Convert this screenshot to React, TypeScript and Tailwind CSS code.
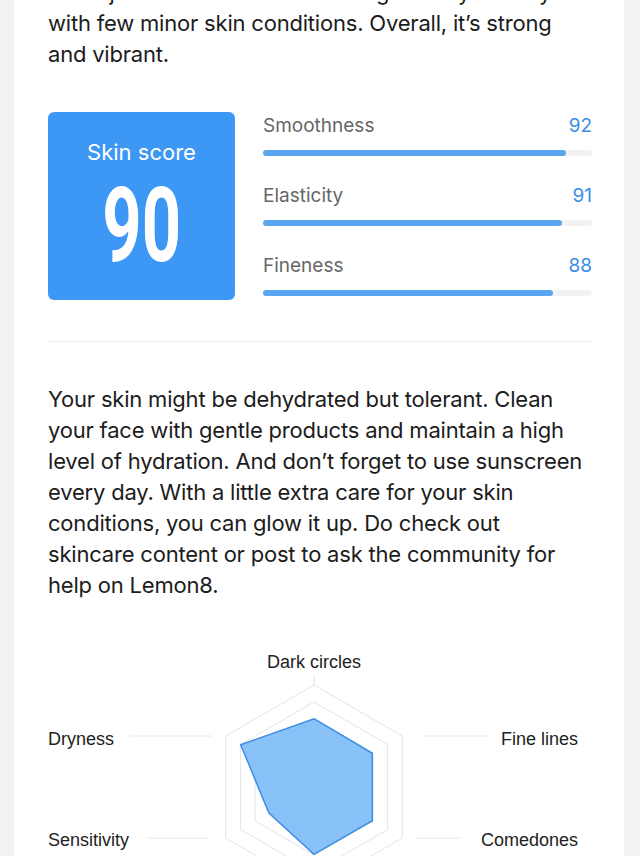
import React from "react";

const metrics = [
  { label: "Smoothness", value: 92 },
  { label: "Elasticity", value: 91 },
  { label: "Fineness", value: 88 },
];

// radar axes, clockwise from top
const radar = [0.67, 0.66, 0.66, 0.66, 0.51, 0.83];

function hexPoints(cx: number, cy: number, r: number, scales?: number[]) {
  return Array.from({ length: 6 })
    .map((_, i) => {
      const a = (-90 + i * 60) * (Math.PI / 180);
      const s = scales ? scales[i] : 1;
      return `${(cx + Math.cos(a) * r * s).toFixed(1)},${(cy + Math.sin(a) * r * s).toFixed(1)}`;
    })
    .join(" ");
}

function RadarChart() {
  const cx = 266;
  const cy = 146;
  const R = 102;
  const font = "'Liberation Sans', Arial, sans-serif";
  return (
    <svg width="544" height="230" viewBox="0 0 544 230" className="block">
      <text x={cx} y={27} textAnchor="middle" fontSize="18" fill="#222" fontFamily={font}>
        Dark circles
      </text>
      <line x1={cx} y1={35} x2={cx} y2={44} stroke="#e2e2e2" strokeWidth="1" />
      {[1, 5 / 6, 4 / 6, 3 / 6, 2 / 6, 1 / 6].map((k) => (
        <polygon key={k} points={hexPoints(cx, cy, R * k)} fill="none" stroke="#e4e4e4" strokeWidth="1" />
      ))}
      <polygon points={hexPoints(cx, cy, R, radar)} fill="#74b6f8" fillOpacity="0.85" stroke="#3d8fe6" strokeWidth="1.5" />

      <text x={0} y={104} fontSize="18" fill="#222" fontFamily={font}>Dryness</text>
      <line x1={82} y1={95} x2={164} y2={95} stroke="#e8e8e8" strokeWidth="1" />
      <text x={530} y={104} textAnchor="end" fontSize="18" fill="#222" fontFamily={font}>Fine lines</text>
      <line x1={377} y1={95} x2={439} y2={95} stroke="#e8e8e8" strokeWidth="1" />

      <text x={0} y={205} fontSize="18" fill="#222" fontFamily={font}>Sensitivity</text>
      <line x1={99} y1={197} x2={160} y2={197} stroke="#e8e8e8" strokeWidth="1" />
      <text x={530} y={205} textAnchor="end" fontSize="18" fill="#222" fontFamily={font}>Comedones</text>
      <line x1={368} y1={197} x2={413} y2={197} stroke="#e8e8e8" strokeWidth="1" />
    </svg>
  );
}

export default function App() {
  return (
    <div className="h-[856px] overflow-hidden bg-[#f2f2f2] font-['Inter','Liberation_Sans',sans-serif]">
      <div className="ml-[14px] w-[610px] min-h-full bg-white pl-[34px] pr-[32px] flex flex-col">
        <p className="shrink-0 w-[540px] -mt-[23px] text-[22px] leading-[31px] tracking-[-0.2px] text-[#1c1c1c]">
          Good job. Your skin condition is generally healthy with few minor skin conditions. Overall, it’s strong
          and vibrant.
        </p>

        <div className="shrink-0 mt-[42px] flex items-start gap-[28px]">
          <div className="w-[187px] h-[188px] shrink-0 rounded-[6px] bg-[#3d97f5] flex flex-col items-center pt-[26px]">
            <span className="text-[22px] leading-[28px] text-white">Skin score</span>
            <span className="mt-[8px] text-[104px] leading-none font-bold text-white font-['Roboto',sans-serif] scale-x-[0.66]">
              90
            </span>
          </div>
          <div className="flex-1 flex flex-col gap-[26px]">
            {metrics.map((m) => (
              <div key={m.label}>
                <div className="flex justify-between items-center h-[28px]">
                  <span className="text-[19px] text-[#666]">{m.label}</span>
                  <span className="text-[19px] text-[#3a8ee6]">{m.value}</span>
                </div>
                <div className="mt-[10px] h-[6px] rounded-full bg-[#f2f2f2]">
                  <div className="h-full rounded-full bg-[#5aa5f0]" style={{ width: `${m.value}%` }} />
                </div>
              </div>
            ))}
          </div>
        </div>

        <div className="shrink-0 mt-[41px] h-px bg-[#ececec]" />

        <p className="shrink-0 w-[540px] mt-[42px] text-[22px] leading-[31px] tracking-[-0.2px] text-[#1c1c1c]">
          Your skin might be dehydrated but tolerant. Clean your face with gentle products and maintain a high
          level of hydration. And don’t forget to use sunscreen every day. With a little extra care for your skin
          conditions, you can glow it up. Do check out skincare content or post to ask the community for help on
          Lemon8.
        </p>

        <div className="shrink-0 mt-[40px]">
          <RadarChart />
        </div>
      </div>
    </div>
  );
}
